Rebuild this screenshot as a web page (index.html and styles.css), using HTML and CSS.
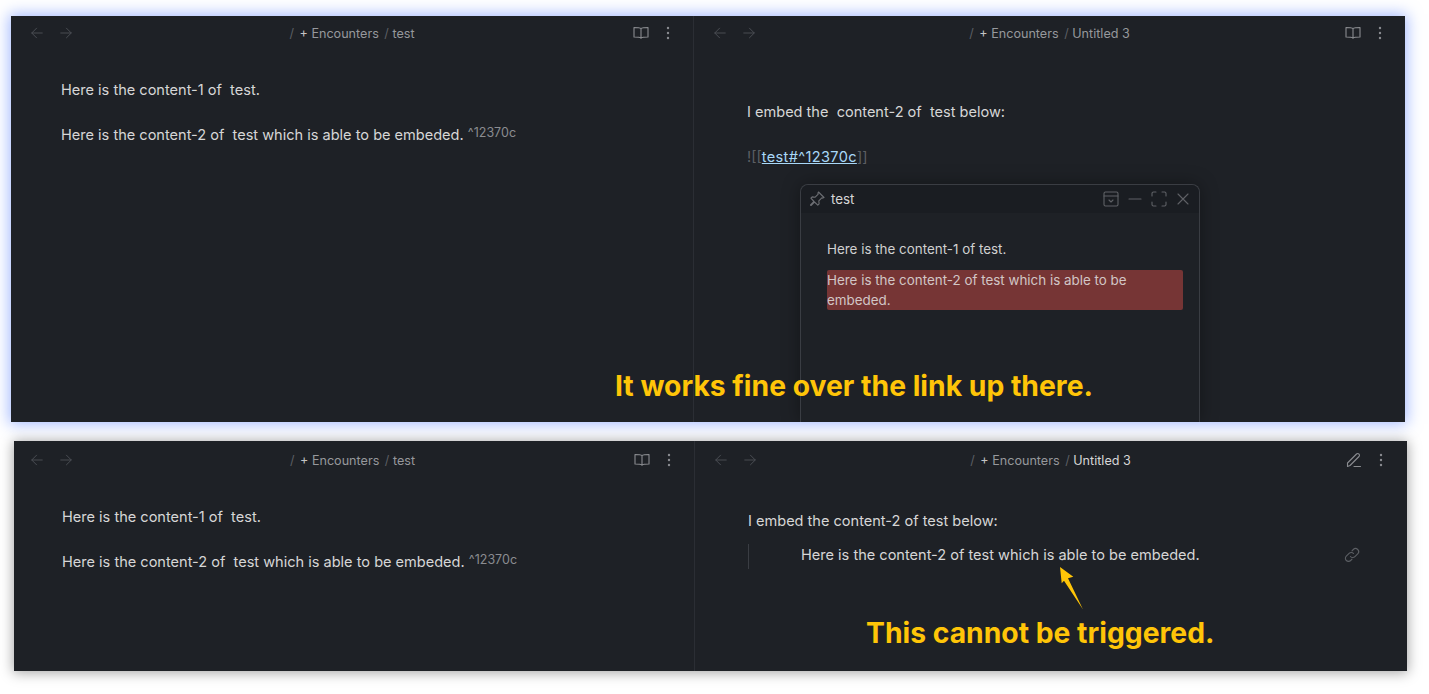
FILE: index.html
```html
<!DOCTYPE html>
<html lang="en">
<head>
<meta charset="utf-8">
<title>Embed hover comparison</title>
<link rel="stylesheet" href="styles.css">
</head>
<body>
<svg class="sprite" width="0" height="0" aria-hidden="true">
  <defs>
    <symbol id="i-back" viewBox="0 0 16 16"><path d="M14 8H2M7.5 2.5 2 8l5.500 5.500"/></symbol>
    <symbol id="i-forward" viewBox="0 0 16 16"><path d="M2 8h12M8.500 2.500 14 8l-5.500 5.500"/></symbol>
    <symbol id="i-book" viewBox="0 0 16 16"><path d="M8 3.500C7 2.700 5.500 2.500 1 2.500v9.500c4.500 0 6 .2 7 1.200 1-1 2.500-1.200 7-1.200V2.500c-4.500 0-6 .2-7 1zM8 3.500v9.700"/></symbol>
    <symbol id="i-more" viewBox="0 0 16 16"><circle class="dot" cx="8" cy="3" r="1.200"/><circle class="dot" cx="8" cy="8" r="1.200"/><circle class="dot" cx="8" cy="13" r="1.200"/></symbol>
    <symbol id="i-edit" viewBox="0 0 16 16"><path d="M1.500 14.500v-3.500L10.500 2a1.600 1.600 0 0 1 2.300 0l.2.200a1.600 1.600 0 0 1 0 2.300L4 13.500zM8 14.500h6.500"/></symbol>
    <symbol id="i-link" viewBox="0 0 16 16"><path d="M6.500 9.500a3 3 0 0 0 4.400.2l2.800-2.800a3.100 3.100 0 0 0-4.400-4.400L8 3.800M9.500 6.500a3 3 0 0 0-4.400-.2L2.300 9.100a3.100 3.100 0 0 0 4.400 4.400L8 12.200"/></symbol>
    <symbol id="i-pin" viewBox="0 0 16 16"><path d="M9.500 1 15 6.500l-1.200.6-1-.3-3 3 .3 3-1.300 1.300L5.500 11 2 14.500 1.500 14 5 10.500 1.900 7.200l1.300-1.300 3 .3 3-3-.3-1z"/></symbol>
    <symbol id="i-archive" viewBox="0 0 16 16"><rect x="1" y="1" width="14" height="14" rx="1.500"/><path d="M1 5h14M6 9l2 2 2-2"/></symbol>
    <symbol id="i-min" viewBox="0 0 16 16"><path d="M2 8h12"/></symbol>
    <symbol id="i-max" viewBox="0 0 16 16"><path d="M1 5V2.500A1.500 1.500 0 0 1 2.500 1H5M11 1h2.500A1.500 1.500 0 0 1 15 2.500V5M15 11v2.500a1.500 1.500 0 0 1-1.500 1.500H11M5 15H2.500A1.500 1.500 0 0 1 1 13.500V11"/></symbol>
    <symbol id="i-close" viewBox="0 0 16 16"><path d="m3 3 10 10M13 3 3 13"/></symbol>
  </defs>
</svg>

<section class="window window-top">
  <div class="pane pane-left">
    <header class="bar">
      <div class="nav"><svg class="icon nav-icon"><use href="#i-back"/></svg><svg class="icon nav-icon"><use href="#i-forward"/></svg></div>
      <div class="crumbs"><span class="sep sep-root">/</span> <span class="plus">+</span> Encounters <span class="sep">/</span> <span>test</span></div>
      <div class="actions"><svg class="icon"><use href="#i-book"/></svg><svg class="icon"><use href="#i-more"/></svg></div>
    </header>
    <div class="doc doc-left">
      <p class="line">Here is the content-1 of  test.</p>
      <p class="line">Here is the content-2 of  test which is able to be embeded. <sup class="block-id">^12370c</sup></p>
    </div>
  </div>
  <div class="pane pane-right">
    <header class="bar">
      <div class="nav"><svg class="icon nav-icon"><use href="#i-back"/></svg><svg class="icon nav-icon"><use href="#i-forward"/></svg></div>
      <div class="crumbs"><span class="sep sep-root">/</span> <span class="plus">+</span> Encounters <span class="sep">/</span> <span>Untitled 3</span></div>
      <div class="actions"><svg class="icon"><use href="#i-book"/></svg><svg class="icon"><use href="#i-more"/></svg></div>
    </header>
    <div class="doc doc-right-top">
      <p class="line">I embed the  content-2 of  test below:</p>
      <p class="line"><span class="bracket">![[</span><a class="wikilink">test#^12370c</a><span class="bracket">]]</span></p>
    </div>
  </div>

  <aside class="popover">
    <div class="pop-head">
      <svg class="icon pop-pin"><use href="#i-pin"/></svg>
      <span class="pop-title">test</span>
      <div class="pop-tools">
        <svg class="icon"><use href="#i-archive"/></svg>
        <svg class="icon"><use href="#i-min"/></svg>
        <svg class="icon"><use href="#i-max"/></svg>
        <svg class="icon"><use href="#i-close"/></svg>
      </div>
    </div>
    <div class="pop-body">
      <p class="pop-line">Here is the content-1 of test.</p>
      <p class="pop-line pop-hit">Here is the content-2 of test which is able to be embeded.</p>
    </div>
  </aside>

  <div class="callout callout-top">It works fine over the link up there.</div>
</section>

<section class="window window-bottom">
  <div class="pane pane-left">
    <header class="bar">
      <div class="nav"><svg class="icon nav-icon"><use href="#i-back"/></svg><svg class="icon nav-icon"><use href="#i-forward"/></svg></div>
      <div class="crumbs"><span class="sep sep-root">/</span> <span class="plus">+</span> Encounters <span class="sep">/</span> <span>test</span></div>
      <div class="actions"><svg class="icon"><use href="#i-book"/></svg><svg class="icon"><use href="#i-more"/></svg></div>
    </header>
    <div class="doc doc-left">
      <p class="line">Here is the content-1 of  test.</p>
      <p class="line">Here is the content-2 of  test which is able to be embeded. <sup class="block-id">^12370c</sup></p>
    </div>
  </div>
  <div class="pane pane-right">
    <header class="bar">
      <div class="nav"><svg class="icon nav-icon"><use href="#i-back"/></svg><svg class="icon nav-icon"><use href="#i-forward"/></svg></div>
      <div class="crumbs"><span class="sep sep-root">/</span> <span class="plus">+</span> Encounters <span class="sep">/</span> <span class="crumb-active">Untitled 3</span></div>
      <div class="actions"><svg class="icon"><use href="#i-edit"/></svg><svg class="icon"><use href="#i-more"/></svg></div>
    </header>
    <div class="doc doc-right-bottom">
      <p class="line-tight">I embed the content-2 of test below:</p>
      <div class="embed">
        <p class="embed-text">Here is the content-2 of test which is able to be embeded.</p>
        <svg class="icon embed-link"><use href="#i-link"/></svg>
      </div>
    </div>
  </div>

  <svg class="arrow" viewBox="0 0 26 46" width="26" height="46" aria-hidden="true"><polygon points="1,1 14.300,10.700 9,12.300 24,43.500 5,14.700 2.700,17.300"/></svg>
  <div class="callout callout-bottom">This cannot be triggered.</div>
</section>
</body>
</html>
```

FILE: styles.css
```css
* { box-sizing: border-box; }

html, body { margin: 0; height: 100%; }

body {
  background: #fff;
  font-family: Inter, "Liberation Sans", sans-serif;
  color: #d6d6d6;
  overflow: hidden;
  padding-top: 16px;
}

.sprite { display: block; position: absolute; }

.window {
  position: relative;
  display: flex;
  background: #1e2126;
  overflow: hidden;
}

.window-top {
  width: 1394px;
  height: 406px;
  margin-left: 11px;
  box-shadow: 0 0 14px 2px rgba(90, 130, 255, .55);
}

.window-bottom {
  width: 1393px;
  height: 230px;
  margin: 19px 0 0 14px;
  box-shadow: 0 1px 12px 1px rgba(0, 0, 0, .35);
}

.pane { display: flex; flex-direction: column; min-width: 0; }

.pane-left { border-right: 1px solid #2b2e34; }
.window-top .pane-left { width: 683px; }
.window-bottom .pane-left { width: 681px; }
.pane-right { flex: 1; }

.bar {
  display: flex;
  align-items: center;
  height: 34px;
  padding: 0 17px 0 19px;
}

.window-bottom .bar { height: 38px; }
.window-bottom .pane-left .bar { padding-left: 16px; }
.window-bottom .pane-right .bar { padding-right: 18px; }

.nav, .actions { display: flex; align-items: center; }
.nav { gap: 15px; }
.actions { gap: 11px; }

.icon {
  width: 16px;
  height: 16px;
  fill: none;
  stroke: #8a8c90;
  stroke-width: 1.100;
  stroke-linecap: round;
  stroke-linejoin: round;
  flex: none;
}

.nav-icon { width: 14px; height: 14px; stroke: #4b4e54; }

.dot { fill: #8a8c90; stroke: none; }

.crumbs {
  flex: 1;
  text-align: center;
  font-size: 12.600px;
  color: #96989c;
  white-space: pre;
  padding-right: 4px;
}

.sep { color: #5c5f64; margin-left: 2px; }
.sep-root { margin-right: 2px; }
.plus { color: #c4c4c4; }
.crumb-active { color: #d6d6d6; }

.doc { font-size: 14.550px; }

.doc-left { padding: 29px 0 0 50px; }
.window-bottom .doc-left { padding: 27px 0 0 48px; }
.doc-right-top { padding: 51px 0 0 53px; }
.doc-right-bottom { padding: 31px 0 0 53px; }

.line {
  margin: 0 0 23px;
  line-height: 22px;
  white-space: pre;
}

.line-tight { margin: 0; line-height: 22px; }

.block-id {
  font-size: 12.500px;
  color: #8a8c90;
  line-height: 0;
  vertical-align: 3px;
}

.bracket { color: #5c5f64; }

.wikilink {
  color: #a8d8f8;
  letter-spacing: .35px;
  text-decoration: underline;
}

.embed {
  display: flex;
  align-items: center;
  margin-top: 12px;
  height: 25px;
  padding-left: 52px;
  padding-right: 47px;
  border-left: 1px solid #3a3d43;
}

.embed-text { margin: 0; flex: 1; line-height: 22px; position: relative; top: -2px; }
.embed-link { stroke: #5c5f64; position: relative; top: -2px; }

.popover {
  position: absolute;
  left: 789px;
  top: 168px;
  width: 400px;
  height: 238px;
  background: #1e2126;
  border: 1px solid #3a3d43;
  border-bottom: 0;
  border-radius: 8px 8px 0 0;
  box-shadow: 0 0 18px rgba(0, 0, 0, .35);
}

.pop-head {
  display: flex;
  align-items: center;
  height: 28px;
  padding: 0 8px;
  background: #1a1d22;
  border-radius: 8px 8px 0 0;
}

.pop-pin { stroke: #6c6e73; }
.pop-title { margin-left: 6px; font-size: 13.400px; color: #d6d6d6; }
.pop-tools { display: flex; margin-left: auto; gap: 8px; }
.pop-tools .icon { stroke: #5f6166; }

.pop-body { padding: 26px 16px 0 26px; font-size: 13.400px; line-height: 20px; }

.pop-line { margin: 0 0 11px; color: #d0d0d0; }

.pop-hit { background: #763535; border-radius: 2px; color: #d2c6c6; }

.callout {
  position: absolute;
  font-weight: 700;
  color: #ffc508;
  white-space: nowrap;
}

.callout-top { left: 604px; top: 352px; font-size: 28.300px; line-height: 36px; }
.callout-bottom { left: 852px; top: 174px; font-size: 28.300px; line-height: 36px; }

.arrow {
  position: absolute;
  left: 1045px;
  top: 125px;
  fill: #ffc508;
}
```
